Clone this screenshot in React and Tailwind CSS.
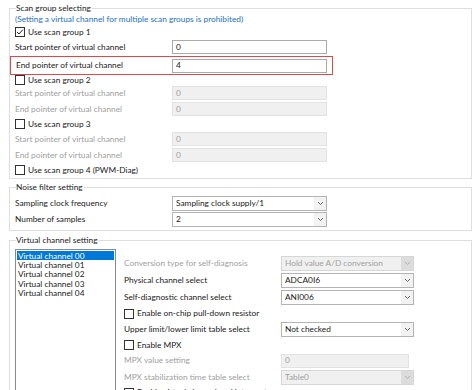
import React from 'react';

const Chevron = ({ color = '#555' }) => (
  <svg width="7" height="5" viewBox="0 0 7 5">
    <path d="M1 1 L3.5 3.5 L6 1" fill="none" stroke={color} strokeWidth="1" />
  </svg>
);

const CheckBox = ({ checked, label }) => (
  <div className="flex items-center gap-[3px]">
    <div className="w-[10px] h-[10px] border border-[#333] bg-white flex items-center justify-center">
      {checked && (
        <svg width="8" height="8" viewBox="0 0 8 8">
          <path d="M1 4 L3 6 L7 1.5" fill="none" stroke="#222" strokeWidth="1" />
        </svg>
      )}
    </div>
    <span className="text-[#1a1a1a]">{label}</span>
  </div>
);

const TextBox = ({ value, disabled, width = 'w-[155px]' }) => (
  <div
    className={`${width} h-[14px] border flex items-center px-[3px] ${
      disabled ? 'bg-[#f0f0f0] border-[#e2e2e2] text-[#a0a0a0]' : 'bg-white border-[#aaaaaa] text-[#1a1a1a]'
    }`}
  >
    {value}
  </div>
);

const Select = ({ value, disabled, width = 'w-[155px]' }) => (
  <div
    className={`${width} h-[15px] border flex items-stretch ${
      disabled ? 'bg-[#f0f0f0] border-[#d6d6d6] text-[#a0a0a0]' : 'bg-white border-[#b4b4b4] text-[#1a1a1a]'
    }`}
  >
    <div className="flex-1 flex items-center px-[3px]">{value}</div>
    <div className={`w-[12px] flex items-center justify-center ${disabled ? 'bg-[#dcdcdc]' : 'bg-[#f2f2f2]'}`}>
      <Chevron color={disabled ? '#b0b0b0' : '#666'} />
    </div>
  </div>
);

const Row = ({ label, disabled, children, h = 'h-[16px]' }) => (
  <div className={`${h} flex items-center`}>
    <span className={`w-[157px] ${disabled ? 'text-[#a0a0a0]' : 'text-[#1a1a1a]'}`}>{label}</span>
    {children}
  </div>
);

const GroupBox = ({ title, className = '', children }) => (
  <fieldset className={`border border-[#dedede] ml-[9px] mr-[2px] pl-[5px] ${className}`}>
    <legend className="text-[#1a1a1a] leading-[10px] ml-[1px] pr-[1px]">{title}</legend>
    {children}
  </fieldset>
);

const channels = ['Virtual channel 00', 'Virtual channel 01', 'Virtual channel 02', 'Virtual channel 03', 'Virtual channel 04'];

export default function App() {
  return (
    <div className="w-[474px] h-[390px] overflow-hidden bg-white text-[8.3px] leading-none pt-[3px]" style={{ fontFamily: 'Lato, sans-serif' }}>
      {/* Scan group selecting */}
      <GroupBox title="Scan group selecting" className="pb-[1px]">
        <div className="h-[12px] flex items-center text-[#1e6fc8]">
          (Setting a virtual channel for multiple scan groups is prohibited)
        </div>
        <div className="h-[14px] flex items-center">
          <CheckBox checked label="Use scan group 1" />
        </div>
        <Row label="Start pointer of virtual channel">
          <TextBox value="0" />
        </Row>
        <div className="-ml-[5px] mt-[1px] w-[323px] h-[19px] border border-[#e04848] flex items-center pl-[5px]">
          <span className="w-[156px] text-[#1a1a1a]">End pointer of virtual channel</span>
          <TextBox value="4" />
        </div>
        <div className="h-[10px] flex items-center">
          <CheckBox label="Use scan group 2" />
        </div>
        <Row label="Start pointer of virtual channel" disabled>
          <TextBox value="0" disabled />
        </Row>
        <Row label="End pointer of virtual channel" disabled>
          <TextBox value="0" disabled />
        </Row>
        <div className="h-[14px] flex items-center">
          <CheckBox label="Use scan group 3" />
        </div>
        <Row label="Start pointer of virtual channel" disabled>
          <TextBox value="0" disabled />
        </Row>
        <Row label="End pointer of virtual channel" disabled>
          <TextBox value="0" disabled />
        </Row>
        <div className="h-[14px] flex items-center">
          <CheckBox label="Use scan group 4 (PWM-Diag)" />
        </div>
      </GroupBox>

      {/* Noise filter setting */}
      <GroupBox title="Noise filter setting" className="mt-[3px] pt-[3px] pb-[2px]">
        <Row label="Sampling clock frequency">
          <Select value="Sampling clock supply/1" />
        </Row>
        <Row label="Number of samples" h="h-[17px]">
          <Select value="2" />
        </Row>
      </GroupBox>

      {/* Virtual channel setting */}
      <GroupBox title="Virtual channel setting" className="mt-[4px] pt-[4px] h-[200px]">
        <div className="flex">
          <div className="w-[101px] h-[150px] border border-[#8a8a8a] bg-white pt-[1px] px-[1px]">
            {channels.map((c, i) => (
              <div
                key={c}
                className={`h-[9.4px] flex items-center pl-[1px] ${i === 0 ? 'bg-[#0078d7] text-white' : 'text-[#1a1a1a]'}`}
              >
                {c}
              </div>
            ))}
          </div>
          <div className="ml-[8px] pt-[6px] flex flex-col">
            <Row label="Conversion type for self-diagnosis" disabled h="h-[17px]">
              <Select value="Hold value A/D conversion" disabled width="w-[133px]" />
            </Row>
            <Row label="Physical channel select" h="h-[17px]">
              <Select value="ADCA0I6" width="w-[133px]" />
            </Row>
            <Row label="Self-diagnostic channel select" h="h-[17px]">
              <Select value="ANI006" width="w-[133px]" />
            </Row>
            <div className="h-[15px] flex items-center">
              <CheckBox label="Enable on-chip pull-down resistor" />
            </div>
            <Row label="Upper limit/lower limit table select" h="h-[17px]">
              <Select value="Not checked" width="w-[133px]" />
            </Row>
            <div className="h-[14px] flex items-center">
              <CheckBox label="Enable MPX" />
            </div>
            <Row label="MPX value setting" disabled h="h-[17px]">
              <TextBox value="0" disabled width="w-[128px]" />
            </Row>
            <Row label="MPX stabilization time table select" disabled h="h-[16px]">
              <Select value="Table0" disabled width="w-[133px]" />
            </Row>
            <div className="h-[15px] flex items-center">
              <CheckBox label="Enable virtual channel end interrupt" />
            </div>
          </div>
        </div>
      </GroupBox>
    </div>
  );
}
